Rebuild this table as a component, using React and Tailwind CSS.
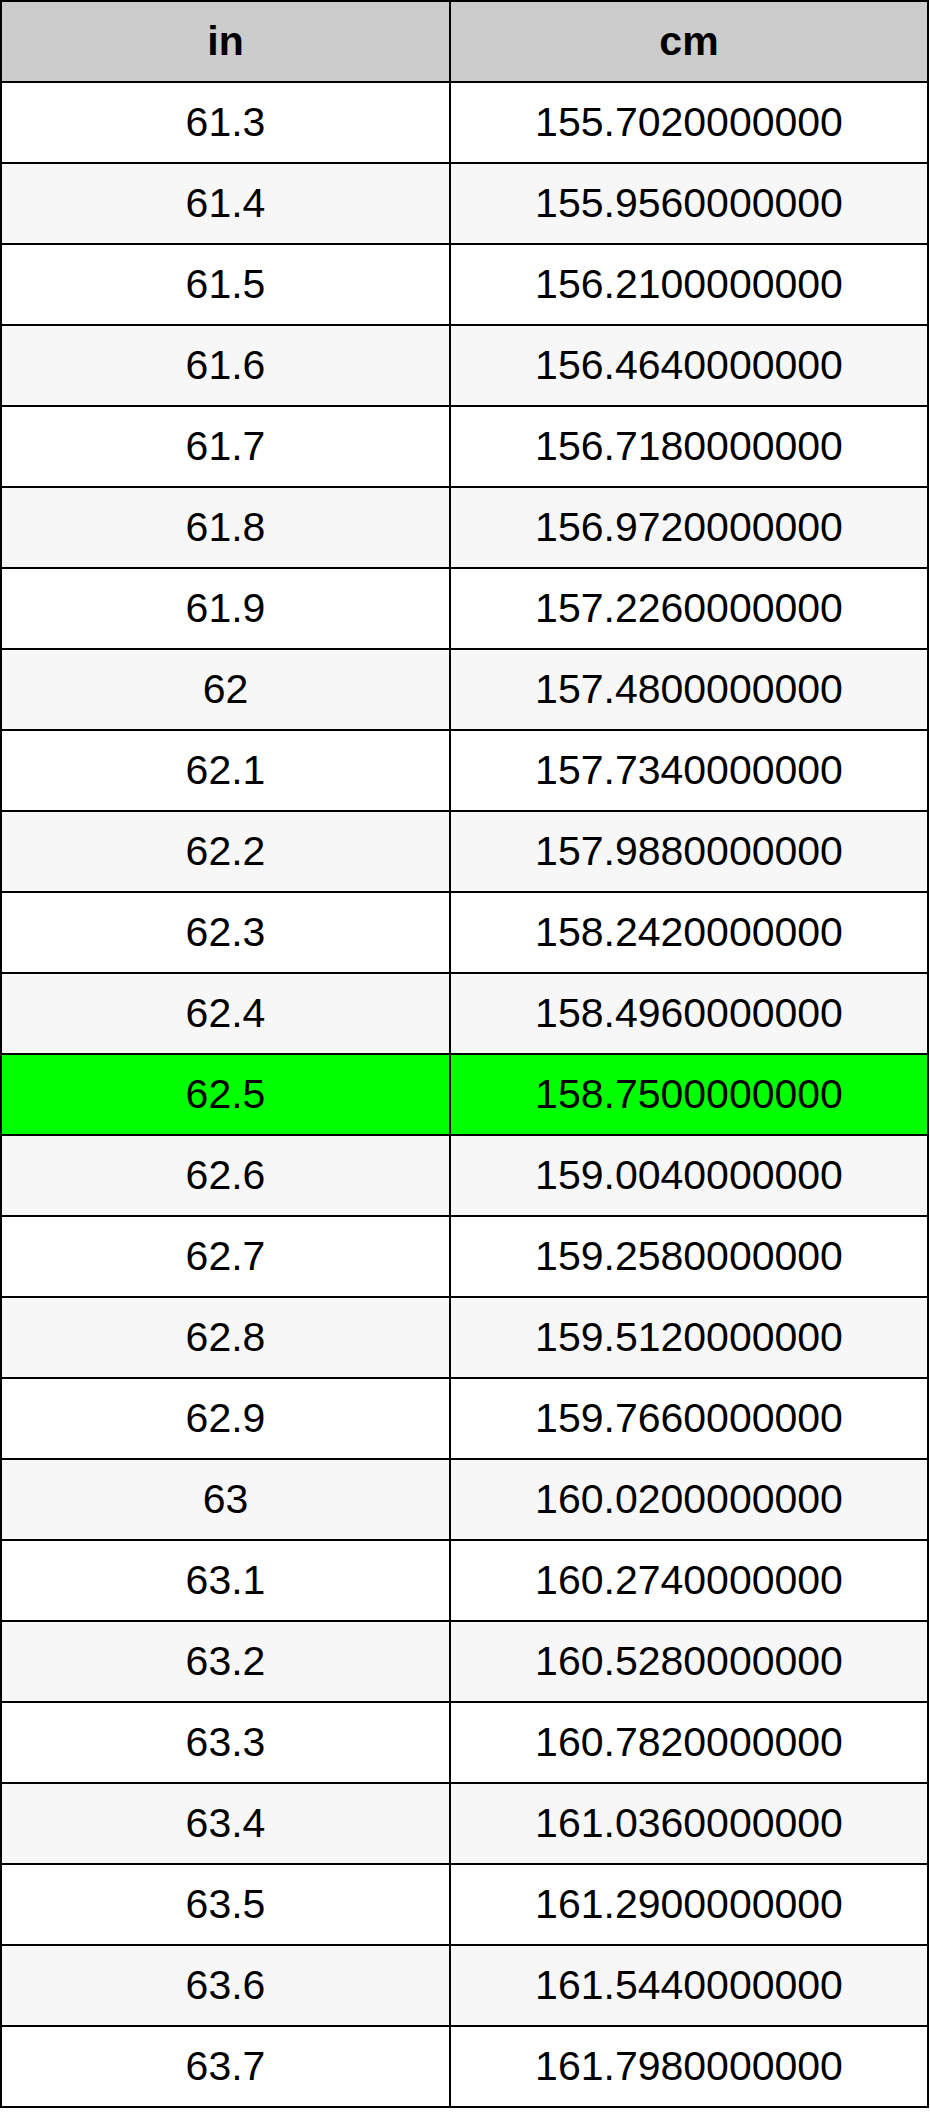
import React from 'react';

// tenths of an inch, 61.3 .. 63.7
const rows = [];
for (let t = 613; t <= 637; t++) {
  const inch = t % 10 === 0 ? String(t / 10) : `${Math.floor(t / 10)}.${t % 10}`;
  const milli = t * 254; // cm in thousandths
  const cm = `${Math.floor(milli / 1000)}.${String(milli % 1000).padStart(3, '0')}0000000`;
  rows.push({ inch, cm, highlight: t === 625 });
}

const App = () => {
  return (
    <div className="w-[930px] min-h-[2115px] bg-white">
      <div
        className="w-[929px] border-t-2 border-l-2 border-black text-black text-[41px]"
        style={{ fontFamily: '"Liberation Sans", Arial, sans-serif' }}
      >
        <div className="flex h-[81px] bg-[#cccccc] border-b-2 border-black font-bold">
          <div className="w-[449px] border-r-2 border-black flex items-center justify-center">in</div>
          <div className="w-[478px] border-r-2 border-black flex items-center justify-center">cm</div>
        </div>
        {rows.map((r, i) => (
          <div
            key={r.inch}
            className={`flex h-[81px] border-b-2 border-black ${
              r.highlight ? 'bg-[#00ff00]' : i % 2 === 0 ? 'bg-white' : 'bg-[#f7f7f7]'
            }`}
          >
            <div className="w-[449px] border-r-2 border-black flex items-center justify-center">{r.inch}</div>
            <div className="w-[478px] border-r-2 border-black flex items-center justify-center">{r.cm}</div>
          </div>
        ))}
      </div>
    </div>
  );
};

export default App;
